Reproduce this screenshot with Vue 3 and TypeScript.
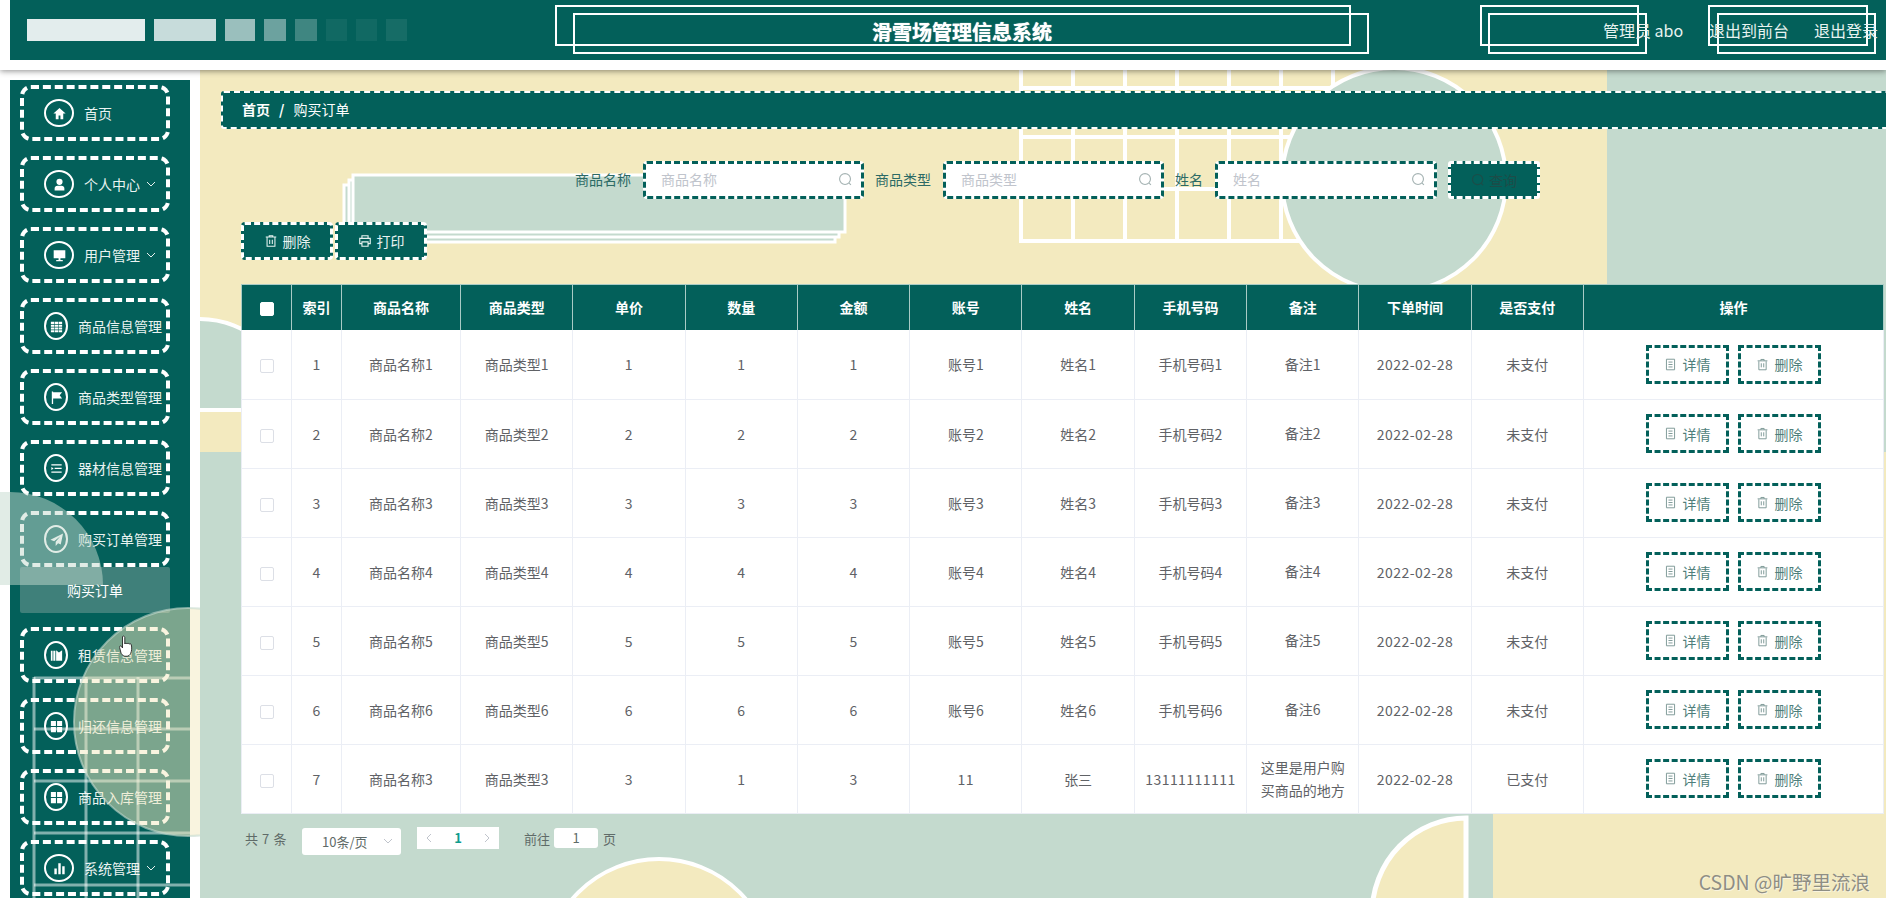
<script setup lang="ts">
interface MenuItem { label: string; icon: string; arrow?: boolean; sub?: string }

const menu: MenuItem[] = [
  { label: '首页', icon: 'home' },
  { label: '个人中心', icon: 'user', arrow: true },
  { label: '用户管理', icon: 'monitor', arrow: true },
  { label: '商品信息管理', icon: 'grid' },
  { label: '商品类型管理', icon: 'flag' },
  { label: '器材信息管理', icon: 'list' },
  { label: '购买订单管理', icon: 'plane', sub: '购买订单' },
  { label: '租赁信息管理', icon: 'book' },
  { label: '归还信息管理', icon: 'squares' },
  { label: '商品入库管理', icon: 'squares' },
  { label: '系统管理', icon: 'bars', arrow: true },
]

const icons: Record<string, string> = {
  home: 'M8 2 1.5 8H4v6h3v-3.8h2V14h3V8h2.500z',
  user: 'M8 1.800a3.300 3.300 0 1 1 0 6.600A3.300 3.300 0 0 1 8 1.800zM2.800 14.500v-2.300c0-1.700 1.400-2.800 3-2.800h4.400c1.600 0 3 1.100 3 2.800v2.300z',
  monitor: 'M1.800 2.500h12.400v8.500H1.800zM7 11h2v1.800h2.500V14h-7v-1.200H7z',
  grid: 'M2 3h3.600v2.300H2zM6.200 3h3.600v2.300H6.200zM10.400 3H14v2.300h-3.600zM2 6h3.600v2.300H2zM6.200 6h3.600v2.300H6.200zM10.400 6H14v2.300h-3.600zM2 9h3.600v2.300H2zM6.200 9h3.600v2.300H6.200zM10.400 9H14v2.300h-3.600zM2 12h3.600v2H2zM6.200 12h3.600v2H6.200zM10.400 12H14v2h-3.600z',
  flag: 'M3 1.500h1.400V15H3zM4.400 2.500H14l-2.600 3.200L14 9H4.400z',
  list: 'M2.500 3.500h11v1.300h-11zM6 7.300h7.500v1.300H6zM2.500 11.200h11v1.300h-11zM2.500 6.500 5 8 2.500 9.500z',
  plane: 'M15 1.500 1.500 8.200l4 1.600 6.600-5.300-5 6V15l2.600-3 2.800 1.300z',
  book: 'M2 3h1.800v10.500H2zM4.600 3h2.200v10.500H4.600zM7.600 2.500l3 2.200 3.400-2.200v11H7.600z',
  squares: 'M2 2h5.400v5.400H2zM8.600 2H14v5.400H8.600zM2 8.600h5.400V14H2zM8.600 8.600H14V14H8.600z',
  bars: 'M2.500 8h2.600v6H2.500zM6.700 2.500h2.600V14H6.700zM10.900 5.500h2.600V14h-2.600z',
}

const columns = ['索引', '商品名称', '商品类型', '单价', '数量', '金额', '账号', '姓名', '手机号码', '备注', '下单时间', '是否支付', '操作']

const rows: string[][] = [1, 2, 3, 4, 5, 6].map((n) => [
  String(n), `商品名称${n}`, `商品类型${n}`, String(n), String(n), String(n),
  `账号${n}`, `姓名${n}`, `手机号码${n}`, `备注${n}`, '2022-02-28', '未支付',
])
rows.push(['7', '商品名称3', '商品类型3', '3', '1', '3', '11', '张三', '13111111111', '这里是用户购买商品的地方', '2022-02-28', '已支付'])

const isNumeric = (v: string) => /^[\d-]+$/.test(v)

const filters = [
  { label: '商品名称', wide: false },
  { label: '商品类型', wide: false },
  { label: '姓名', wide: true },
]

const gridX = [1021, 1073, 1125, 1177, 1229, 1281, 1333]
const gridY = [88, 137, 189, 241]
const overlayX = [34, 86, 138]
const overlayY = [678, 729, 781, 833, 885]
</script>

<template>
  <div class="page">
    <header class="topbar">
      <div class="bar">
        <div class="logo">
          <i v-for="(w, i) in [118, 62, 30, 22, 22, 21, 21, 21]" :key="i" :class="'tile t' + i" :style="{ width: w + 'px' }"></i>
        </div>
        <div class="title-wrap">
          <span class="frame f-a"></span><span class="frame f-b"></span>
          <h1 class="title">滑雪场管理信息系统</h1>
        </div>
        <div class="admin-wrap">
          <span class="frame f-a"></span><span class="frame f-b"></span>
          <span class="admin">管理员 abo</span>
        </div>
        <div class="links-wrap">
          <span class="frame f-a"></span><span class="frame f-b"></span>
          <span class="link first">退出到前台</span>
          <span class="link">退出登录</span>
        </div>
      </div>
    </header>

    <div class="body">
      <div class="side-wrap">
        <aside class="sidebar">
          <template v-for="item in menu" :key="item.label">
            <div class="menu-item">
              <span class="round">
                <svg viewBox="0 0 16 16" width="15" height="15"><path :d="icons[item.icon]" fill="#fff" /></svg>
              </span>
              <span class="menu-label">{{ item.label }}</span>
              <svg v-if="item.arrow" class="chev" viewBox="0 0 10 6" width="10" height="6">
                <path d="M1 1l4 4 4-4" fill="none" stroke="#e6f0ee" stroke-width="1" />
              </svg>
            </div>
            <div v-if="item.sub" class="sub-item">{{ item.sub }}</div>
          </template>
        </aside>
      </div>

      <main class="main">
        <svg class="backdrop" viewBox="200 70 1686 828" width="1686" height="828">
          <rect x="200" y="70" width="1407" height="382" fill="#f3eabf" />
          <rect x="1607" y="70" width="279" height="382" fill="#c4dace" />
          <rect x="200" y="452" width="1293" height="446" fill="#c4dace" />
          <rect x="1493" y="452" width="393" height="446" fill="#f3eabf" />

          <g fill="#c4dace" stroke="#fff" stroke-width="3">
            <rect x="344" y="185" width="491" height="57" />
            <rect x="349" y="180" width="490" height="57" />
            <rect x="353" y="175" width="492" height="57" />
          </g>

          <g stroke="#fff" stroke-width="4">
            <line v-for="x in gridX" :key="'x' + x" :x1="x" y1="70" :x2="x" y2="243" />
            <line v-for="y in gridY" :key="'y' + y" x1="1019" :y1="y" x2="1335" :y2="y" />
          </g>
          <circle cx="1394" cy="180" r="112" fill="#c4dace" stroke="#fff" stroke-width="4" />

          <path d="M109 410A91 91 0 0 1 291 410Z" fill="#c4dace" stroke="#fff" stroke-width="4" />
          <circle cx="659" cy="973" r="114" fill="#f3eabf" stroke="#fff" stroke-width="4" />
          <path d="M1466 818A94 96 0 0 0 1372 914H1466Z" fill="#f3eabf" stroke="#fff" stroke-width="5" />
        </svg>

        <nav class="crumb">
          <b>首页</b><span class="sep">/</span><span>购买订单</span>
        </nav>

        <form class="filters" @submit.prevent>
          <template v-for="f in filters" :key="f.label">
            <label class="f-label">{{ f.label }}</label>
            <div class="f-input" :class="{ wide: f.wide }">
              <span class="ph">{{ f.label }}</span>
              <svg class="mag" viewBox="0 0 16 16" width="15" height="15">
                <circle cx="7.500" cy="7.500" r="5.800" fill="none" stroke="#a5b3b3" stroke-width="1.200" />
                <path d="M11.800 11.800l2 2" stroke="#a5b3b3" stroke-width="1.200" />
              </svg>
            </div>
          </template>
          <button class="query" type="button">
            <svg viewBox="0 0 16 16" width="14" height="14">
              <circle cx="7.500" cy="7.500" r="5.800" fill="none" stroke="#1d4c48" stroke-width="1.200" />
              <path d="M11.800 11.800l2 2" stroke="#1d4c48" stroke-width="1.200" />
            </svg>
            查询
          </button>
        </form>

        <div class="tools">
          <button class="tool" type="button">
            <svg viewBox="0 0 16 16" width="14" height="14" fill="none" stroke="#e8f3f1" stroke-width="1.200">
              <path d="M3.500 4v10h9V4M2 3.500h12M6 3.500V2h4v1.500M6.500 6.500v5M9.500 6.500v5" />
            </svg>
            删除
          </button>
          <button class="tool" type="button">
            <svg viewBox="0 0 16 16" width="14" height="14" fill="none" stroke="#e8f3f1" stroke-width="1.300">
              <path d="M4.500 5V2h7v3M4.500 11H2V5h12v6h-2.500M4.500 9h7v5h-7z" />
            </svg>
            打印
          </button>
        </div>

        <table class="grid">
          <colgroup>
            <col style="width: 50px" /><col style="width: 50px" /><col style="width: 119px" />
            <col v-for="n in 10" :key="n" style="width: 112.3px" />
            <col />
          </colgroup>
          <thead>
            <tr>
              <th><span class="check on"></span></th>
              <th v-for="c in columns" :key="c">{{ c }}</th>
            </tr>
          </thead>
          <tbody>
            <tr v-for="r in rows" :key="r[0]">
              <td><span class="check"></span></td>
              <td v-for="(v, i) in r" :key="i" :class="{ note: i === 9, num: isNumeric(v) }">{{ v }}</td>
              <td>
                <div class="ops">
                  <button class="op" type="button">
                    <svg viewBox="0 0 16 16" width="13" height="13" fill="none" stroke="#7f9a98" stroke-width="1.200">
                      <path d="M3 1.500h10v13H3zM5.500 5h5M5.500 8h5M5.500 11h5" />
                    </svg>
                    详情
                  </button>
                  <button class="op" type="button">
                    <svg viewBox="0 0 16 16" width="13" height="13" fill="none" stroke="#7f9a98" stroke-width="1.200">
                      <path d="M3.500 4v10.500h9V4M2 3.500h12M6 3.500V1.800h4v1.700M6.500 6.500v5M9.500 6.500v5" />
                    </svg>
                    删除
                  </button>
                </div>
              </td>
            </tr>
          </tbody>
        </table>

        <div class="pager">
          <span class="total">共 7 条</span>
          <div class="size">
            <span>10条/页</span>
            <svg viewBox="0 0 10 6" width="10" height="6"><path d="M1 1l4 4 4-4" fill="none" stroke="#c0c4cc" /></svg>
          </div>
          <div class="pages">
            <svg viewBox="0 0 6 10" width="6" height="10"><path d="M5 1 1 5l4 4" fill="none" stroke="#c0c4cc" /></svg>
            <b>1</b>
            <svg viewBox="0 0 6 10" width="6" height="10"><path d="M1 1l4 4-4 4" fill="none" stroke="#c0c4cc" /></svg>
          </div>
          <span class="goto">前往</span>
          <span class="jump">1</span>
          <span class="page-word">页</span>
        </div>

        <span class="mark">CSDN @旷野里流浪</span>
      </main>
    </div>

    <svg class="veil" viewBox="0 0 200 898" width="200" height="898">
      <path d="M0 492H10A93 93 0 0 1 103 585H0Z" fill="#c4dace" fill-opacity=".5" />
      <g stroke="#fff" stroke-opacity=".5" stroke-width="3">
        <line v-for="x in overlayX" :key="'v' + x" :x1="x" y1="677" :x2="x" y2="898" />
        <line v-for="y in overlayY" :key="'h' + y" x1="34" :y1="y" x2="200" :y2="y" />
      </g>
      <circle cx="188" cy="722" r="114" fill="#f3eabf" fill-opacity=".5" stroke="#c4dace" stroke-opacity=".6" stroke-width="2" />
    </svg>

    <svg class="cursor" viewBox="0 0 16 23" width="16" height="23">
      <path d="M3.500 1.500c1-.8 2.200-.3 2.300 1V9c.1-1 2-1 2.200 0 .2-1 2-1 2.200.2.300-.8 2-.6 2.100.6.700 3 .5 6-.6 8.500-1 2-2 3-4.700 3-2.500 0-3.700-1-4.900-3L.6 12.500c-.6-1 .8-2.200 1.900-1.200L3.500 13z" fill="#fff" stroke="#222" stroke-width=".9" />
    </svg>
  </div>
</template>

<style>
html, body { margin: 0; background: #fff; }
</style>

<style scoped>
.page {
  position: relative;
  width: 1886px;
  height: 898px;
  overflow: hidden;
  background: #fff;
  font-family: "Noto Sans CJK SC", "Noto Sans", sans-serif;
  font-size: 14px;
  color: #606266;
}
.topbar {
  position: relative;
  z-index: 3;
  height: 70px;
  padding-left: 10px;
  box-sizing: border-box;
  background: #fff;
  box-shadow: 0 1px 6px rgba(0, 0, 0, 0.45);
}
.bar {
  position: relative;
  display: flex;
  align-items: center;
  height: 60px;
  background: #03605a;
  color: #fff;
}
.logo { display: flex; gap: 9px; margin-left: 17px; width: 528px; }
.tile { height: 22px; display: block; background: #fff; }
.t0 { opacity: 0.89; }
.t1 { opacity: 0.78; }
.t2 { opacity: 0.6; }
.t3 { opacity: 0.42; }
.t4 { opacity: 0.24; }
.t5, .t6 { opacity: 0.06; }
.t7 { opacity: 0.08; }

.title-wrap, .admin-wrap, .links-wrap { position: relative; height: 60px; display: flex; align-items: center; }
.title-wrap { width: 814px; justify-content: center; margin-right: 111px; }
.admin-wrap { width: 167px; margin-right: 61px; }
.links-wrap { width: 168px; }
.frame { position: absolute; border: 2px solid #fff; box-sizing: border-box; pointer-events: none; }
.f-a { left: 0; top: 5px; right: 18px; height: 41px; }
.f-b { left: 18px; top: 13px; right: 0; height: 41px; }
.admin-wrap .f-a { right: 8px; }
.admin-wrap .f-b { left: 8px; }
.links-wrap .f-a { right: 8px; }
.links-wrap .f-b { left: 9px; }
.title { margin: 0 0 -2px; font-size: 20px; font-weight: 700; letter-spacing: 0; text-shadow: 0 0 1px #fff; }
.admin { position: absolute; left: 123px; font-size: 16px; white-space: nowrap; color: #e8f3f1; }
.link { position: absolute; left: 1px; font-size: 16px; white-space: nowrap; color: #e8f3f1; }
.link:not(.first) { left: 106px; }

.body { display: flex; height: 828px; }
.side-wrap { width: 200px; flex: none; box-sizing: border-box; padding: 10px 10px 0; }
.sidebar {
  height: 100%;
  box-sizing: border-box;
  padding: 5px 20px 0 10px;
  background: #03605a;
  display: flex;
  flex-direction: column;
  gap: 15px;
  color: #eaf3f1;
}
.menu-item {
  flex: none;
  height: 56px;
  box-sizing: border-box;
  border: 4px dashed #fff;
  border-radius: 11px;
  padding: 0 4px 0 20px;
  display: flex;
  align-items: center;
}
.round {
  flex: 0 1 30px;
  min-width: 0;
  height: 28px;
  box-sizing: border-box;
  border: 2px solid #fff;
  border-radius: 50%;
  display: flex;
  align-items: center;
  justify-content: center;
  margin-right: 10px;
  overflow: hidden;
}
.round svg { flex: none; }
.menu-label { flex: none; white-space: nowrap; }
.chev { flex: none; margin-left: 6px; }
.sub-item {
  flex: none;
  height: 46px;
  margin-top: -15px;
  margin-bottom: -1px;
  line-height: 46px;
  text-align: center;
  background: #3f807a;
  border-radius: 2px;
  color: #fff;
}

.main {
  position: relative;
  flex: 1;
  min-width: 0;
  box-sizing: border-box;
  padding: 21px 0 0 41px;
}
.backdrop { position: absolute; left: 0; top: 0; z-index: 0; }
.crumb, .filters, .tools, .grid, .pager, .mark { position: relative; z-index: 1; }
.crumb {
  margin: 0 -10px 32px -20px;
  height: 38px;
  box-sizing: border-box;
  border: 2px dashed #fff;
  background: #03605a;
  border-radius: 3px;
  padding: 0 0 2px 19px;
  display: flex;
  align-items: center;
  color: #fff;
}
.sep { margin: 0 9px; font-weight: 700; }
.filters { display: flex; align-items: center; height: 38px; padding-left: 334px; }
.f-label { color: #2c6a65; margin-right: 12px; white-space: nowrap; padding-bottom: 2px; }
.f-input {
  width: 221px;
  height: 38px;
  box-sizing: border-box;
  border: 3px dashed #03605a;
  border-radius: 4px;
  background: #fff;
  margin-right: 11px;
  padding: 0 8px 2px 15px;
  display: flex;
  align-items: center;
  justify-content: space-between;
}
.f-input.wide { width: 222px; }
.ph { color: #c0c4cc; }
.query {
  width: 92px;
  height: 38px;
  box-sizing: border-box;
  border: 3px dashed #fff;
  background: #03605a;
  color: #1d4c48;
  border-radius: 3px;
  font: inherit;
  padding: 0;
  display: flex;
  align-items: center;
  justify-content: center;
  gap: 4px;
}
.tools { display: flex; gap: 2px; margin-top: 23px; margin-bottom: 24px; }
.tool {
  width: 92px;
  height: 38px;
  box-sizing: border-box;
  border: 3px dashed #fff;
  border-radius: 4px;
  background: #03605a;
  color: #e8f3f1;
  font: inherit;
  padding: 0 0 1px;
  display: flex;
  align-items: center;
  justify-content: center;
  gap: 5px;
}
.grid {
  width: 1643px;
  table-layout: fixed;
  border-collapse: collapse;
  background: #fff;
}
.grid th {
  height: 43px;
  padding: 0 0 2px;
  background: #03605a;
  color: #fff;
  font-weight: 700;
  border: 1px solid #a9cbc5;
  border-bottom: none;
}
.grid td {
  height: 69px;
  box-sizing: border-box;
  padding: 0;
  text-align: center;
  border: 1px solid #ebeef5;
  border-top: none;
}
.grid td.note { padding: 0 13px; line-height: 23px; }
.grid td.num { letter-spacing: 0.45px; }
.check {
  display: inline-block;
  width: 14px;
  height: 14px;
  box-sizing: border-box;
  border: 1px solid #dcdfe6;
  border-radius: 2px;
  vertical-align: middle;
  background: #fff;
}
.check.on { border-color: #fff; }
.ops { display: flex; justify-content: center; gap: 9px; }
.op {
  width: 83px;
  height: 39px;
  box-sizing: border-box;
  border: 3px dashed #03605a;
  background: #fff;
  color: #4f7f7b;
  font: inherit;
  padding: 0;
  display: flex;
  align-items: center;
  justify-content: center;
  gap: 5px;
}
.pager { display: flex; align-items: flex-start; margin-top: 13px; padding-left: 4px; font-size: 13px; color: #5f6b68; }
.total { width: 57px; line-height: 24px; letter-spacing: 0.6px; }
.size {
  width: 99px;
  height: 27px;
  box-sizing: border-box;
  background: #fff;
  border-radius: 3px;
  padding: 0 8px 0 20px;
  margin: 1px 16px 0 0;
  display: flex;
  align-items: center;
  justify-content: space-between;
}
.pages {
  width: 82px;
  height: 22px;
  box-sizing: border-box;
  background: #fff;
  padding: 0 9px;
  margin-right: 25px;
  display: flex;
  align-items: center;
  justify-content: space-between;
}
.pages b { color: #0f9d8e; }
.goto { line-height: 24px; margin-right: 4px; }
.jump {
  width: 44px;
  height: 20px;
  line-height: 20px;
  margin: 1px 5px 0 0;
  background: #fff;
  border-radius: 3px;
  text-align: center;
}
.page-word { line-height: 24px; }
.mark {
  position: absolute;
  right: 16px;
  bottom: 2px;
  font-size: 19.5px;
  color: #8e8e84;
  text-shadow: 1px 1px 0 rgba(255, 255, 255, 0.5);
}
.veil { position: absolute; left: 0; top: 0; z-index: 2; pointer-events: none; }
.cursor { position: absolute; left: 119px; top: 635px; z-index: 4; }
</style>
